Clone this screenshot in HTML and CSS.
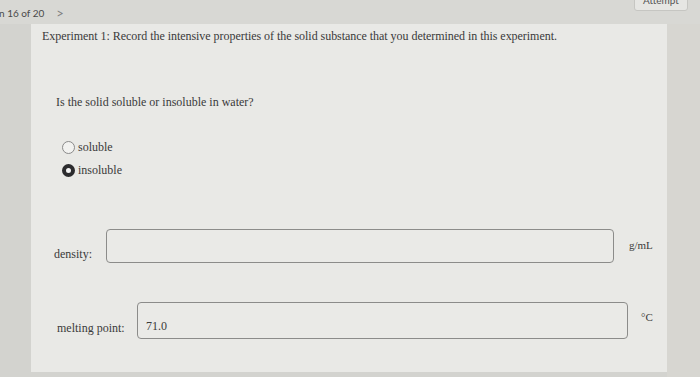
FILE: index.html
```html
<!DOCTYPE html>
<html>
<head>
<meta charset="utf-8">
<link rel="stylesheet" href="styles.css">
</head>
<body>
<div class="header">
  <div class="nav"><span class="count">n 16 of 20</span><span class="chev">&gt;</span></div>
  <div class="attempt">Attempt</div>
</div>
<div class="stage">
  <div class="panel">
    <p class="title">Experiment 1: Record the intensive properties of the solid substance that you determined in this experiment.</p>
    <p class="question">Is the solid soluble or insoluble in water?</p>
    <div class="options">
      <div class="option"><span class="radio"></span><span>soluble</span></div>
      <div class="option"><span class="radio checked"></span><span>insoluble</span></div>
    </div>
    <div class="field density">
      <span class="label">density:</span>
      <div class="input"></div>
      <span class="unit">g/mL</span>
    </div>
    <div class="field melting">
      <span class="label">melting point:</span>
      <div class="input">71.0</div>
      <span class="unit">°C</span>
    </div>
  </div>
  <div class="edge"></div>
</div>
</body>
</html>
```

FILE: styles.css
```css
html, body {
  margin: 0;
  padding: 0;
}
body {
  width: 700px;
  height: 377px;
  overflow: hidden;
  background: #d3d3cf;
  font-family: "Liberation Serif", "Times New Roman", serif;
  color: #3a3a3a;
}
.header {
  height: 24px;
  display: flex;
  justify-content: space-between;
  align-items: flex-start;
  background: #d8d8d4;
}
.nav {
  display: flex;
  align-items: center;
  gap: 12px;
  margin-top: 7px;
  margin-left: -1px;
  font-family: Lato, "Open Sans", sans-serif;
  font-size: 10px;
  color: #4a4a4a;
}
.chev {
  color: #808080;
  font-size: 13px;
  line-height: 12px;
}
.attempt {
  margin-top: -7px;
  margin-right: 12px;
  width: 52px;
  height: 16px;
  border: 1px solid #c6c6c2;
  border-radius: 3px;
  background: #e6e6e3;
  font-family: Lato, sans-serif;
  font-size: 10px;
  line-height: 12px;
  text-align: center;
  color: #555;
}
.stage {
  display: flex;
  height: 353px;
}
.panel {
  margin-left: 31px;
  width: 636px;
  height: 348px;
  background: #e9e9e6;
  padding: 5px 0 0 11px;
  box-sizing: border-box;
  font-size: 12px;
}
.edge {
  flex: 1;
  background: #d7d6d1;
  height: 353px;
}
.title {
  margin: 0;
  line-height: 14px;
  font-size: 12px;
  letter-spacing: -0.04px;
}
.question {
  margin: 52px 0 0 14px;
  line-height: 14px;
}
.options {
  margin: 30px 0 0 20px;
  display: flex;
  flex-direction: column;
  gap: 7px;
}
.option {
  display: flex;
  align-items: center;
  gap: 3px;
  height: 16px;
}
.radio {
  width: 13px;
  height: 13px;
  box-sizing: border-box;
  border: 1px solid #8a8a8a;
  border-radius: 50%;
  background: #f2f2f0;
}
.radio.checked {
  border: 4px solid #2c2c2e;
  background: #f4f4f4;
}
.field {
  display: flex;
  align-items: flex-start;
}
.field .label {
  align-self: center;
  margin-top: 16px;
}
.input {
  box-sizing: border-box;
  border: 1.5px solid #8c8c8a;
  border-radius: 4px;
  background: #eaeae7;
  display: flex;
  align-items: center;
  padding-left: 8px;
}
.unit {
  margin-top: 10px;
  font-size: 11px;
}
.density {
  margin-top: 51px;
  padding-left: 12px;
}
.density .label { width: 52px; }
.density .input {
  width: 508px;
  height: 34px;
}
.density .unit { margin-left: 15px; }
.melting {
  margin-top: 39px;
  padding-left: 15px;
}
.melting .label { width: 80px; }
.melting .input {
  width: 491px;
  height: 37px;
  padding-top: 12px;
}
.melting .unit { margin-left: 13px; margin-top: 9px; }
```
